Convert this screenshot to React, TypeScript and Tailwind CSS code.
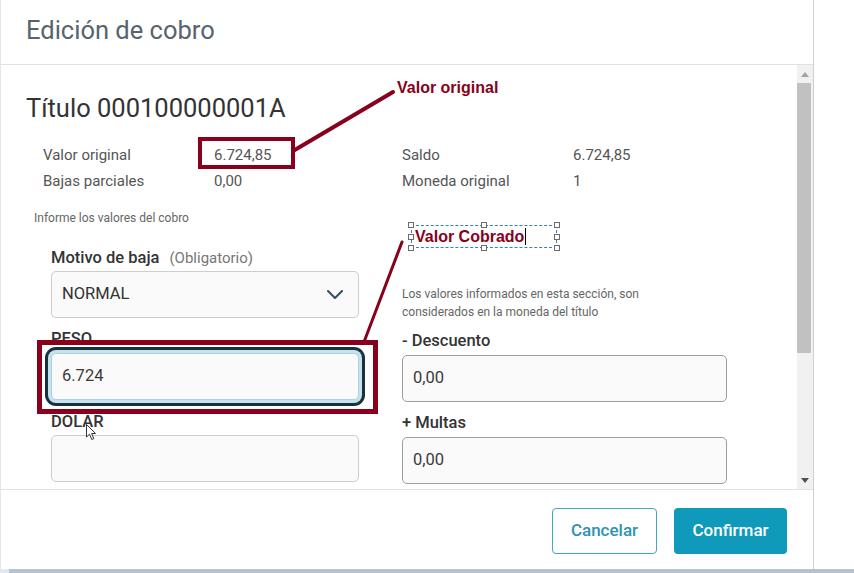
function Label({ children }: { children: React.ReactNode }) {
  return <div className="h-[20px] text-[16.5px] font-medium leading-[20px] text-[#333]">{children}</div>;
}

function Field({ value, className = '' }: { value?: string; className?: string }) {
  return (
    <div className={`flex h-[47px] items-center rounded-[5px] border bg-[#fafafa] pl-[10px] text-[16.5px] text-[#3a3a3a] ${className}`}>
      {value}
    </div>
  );
}

function Scrollbar() {
  return (
    <div className="flex w-[16px] shrink-0 flex-col bg-[#f1f1f1]">
      <div className="flex h-[18px] items-center justify-center">
        <svg width="8" height="5" viewBox="0 0 8 5">
          <path d="M0 5 L4 0 L8 5 Z" fill="#a3a3a3" />
        </svg>
      </div>
      <div className="mr-[2px] h-[270px] bg-[#c1c1c1]" />
      <div className="flex-1" />
      <div className="flex h-[18px] items-center justify-center">
        <svg width="8" height="5" viewBox="0 0 8 5">
          <path d="M0 0 L8 0 L4 5 Z" fill="#505050" />
        </svg>
      </div>
    </div>
  );
}

export default function App() {
  const handles = [
    [411, 225], [484, 225], [557, 225],
    [411, 237], [557, 237],
    [411, 248], [484, 248], [557, 248],
  ];

  return (
    <div className="relative h-[573px] w-[854px] overflow-hidden bg-white font-['Roboto',sans-serif] text-[#333]">
      <div className="flex h-[569px]">
        <div className="flex w-[814px] flex-col border-x border-l-[#e4e6e9] border-r-[#cfcfcf]">
          {/* header */}
          <header className="h-[65px] shrink-0 border-b border-[#e2e2e2] pl-[25px] pt-[15px]">
            <h1 className="text-[25.5px] leading-[30px] text-[#57646d]">Edición de cobro</h1>
          </header>

          {/* body */}
          <div className="flex h-[424px] shrink-0">
            <div className="flex-1 overflow-hidden">
              <h2 className="pl-[25px] pt-[28px] text-[25.5px] leading-[30px] text-[#333]">Título 000100000001A</h2>

              <div className="mt-[19px] grid grid-cols-[171px_188px_171px_1fr] pl-[42px] text-[15px] leading-[26px] text-[#555]">
                <span>Valor original</span>
                <span>6.724,85</span>
                <span>Saldo</span>
                <span>6.724,85</span>
                <span>Bajas parciales</span>
                <span>0,00</span>
                <span>Moneda original</span>
                <span>1</span>
              </div>

              <p className="mt-[16px] pl-[33px] text-[12px] leading-[16px] text-[#666]">Informe los valores del cobro</p>

              <div className="flex">
                <div className="ml-[50px] w-[308px]">
                  <div className="mt-[22px] flex h-[20px] items-center">
                    <Label>Motivo de baja</Label>
                    <span className="ml-[10px] text-[15px] leading-[20px] text-[#777]">(Obligatorio)</span>
                  </div>
                  <div className="mt-[3px] flex h-[47px] items-center justify-between rounded-[5px] border border-[#cdcdcd] bg-[#fafafa] pl-[10px] pr-[15px] text-[16.5px] text-[#333]">
                    <span>NORMAL</span>
                    <svg width="16" height="9" viewBox="0 0 16 9" fill="none">
                      <path d="M1 1 L8 8 L15 1" stroke="#34505f" strokeWidth="2" strokeLinecap="round" strokeLinejoin="round" />
                    </svg>
                  </div>

                  <div className="mt-[11px]">
                    <Label>PESO</Label>
                  </div>
                  <Field
                    value="6.724"
                    className="mt-[4px] border-[#a9d3e0] shadow-[0_0_0_3px_#c6e3ed,0_0_0_6px_#17313d]"
                  />

                  <div className="mt-[12px]">
                    <Label>DOLAR</Label>
                  </div>
                  <Field className="mt-[3px] border-[#cdcdcd]" />
                </div>

                <div className="ml-[43px] w-[325px]">
                  <p className="mt-[59px] text-[12px] leading-[18px] text-[#666]">
                    Los valores informados en esta sección, son
                    <br />
                    considerados en la moneda del título
                  </p>
                  <div className="mt-[10px]">
                    <Label>- Descuento</Label>
                  </div>
                  <Field value="0,00" className="mt-[4px] border-[#9d9d9d]" />
                  <div className="mt-[11px]">
                    <Label>+ Multas</Label>
                  </div>
                  <Field value="0,00" className="mt-[4px] border-[#9d9d9d]" />
                </div>
              </div>
            </div>
            <Scrollbar />
          </div>

          {/* footer */}
          <footer className="flex flex-1 items-start justify-end gap-[17px] border-t border-[#e2e2e2] pr-[26px] pt-[18px]">
            <button className="h-[46px] w-[105px] rounded-[4px] border-[1.5px] border-[#45a6c4] bg-white text-[17px] font-medium text-[#2e93b4]">
              Cancelar
            </button>
            <button className="h-[46px] w-[113px] rounded-[4px] bg-[#0f9abb] text-[17px] font-medium text-white">
              Confirmar
            </button>
          </footer>
        </div>
      </div>
      <div className="flex h-[4px]">
        <div className="w-[9px] bg-[#e3e8ef]" />
        <div className="flex-1 bg-[#b6c1d1]" />
      </div>

      {/* annotations drawn over the screenshot */}
      <svg className="pointer-events-none absolute left-0 top-0" width="854" height="573">
        <line x1="293" y1="151" x2="393" y2="92" stroke="#88001b" strokeWidth="4" strokeLinecap="round" />
        <line x1="402" y1="242" x2="364" y2="342" stroke="#88001b" strokeWidth="3" strokeLinecap="round" />
      </svg>
      <div className="pointer-events-none absolute left-[198px] top-[137px] h-[32px] w-[97px] border-[4px] border-[#88001b]" />
      <div className="pointer-events-none absolute left-[37px] top-[340px] h-[74px] w-[341px] border-[5px] border-[#88001b]" />
      <div className="absolute left-[397px] top-[79px] font-['Liberation_Sans',Arial,sans-serif] text-[16px] font-bold leading-[18px] text-[#88001b]">
        Valor original
      </div>

      <div className="absolute left-[411px] top-[225px] flex h-[23px] w-[146px] items-center border border-dashed border-[#2f7fd3] pl-[3px] font-['Liberation_Sans',Arial,sans-serif] text-[16px] font-bold leading-[18px] text-[#88001b]">
        Valor Cobrado
        <span className="ml-[1px] h-[17px] w-[1px] bg-black" />
      </div>
      {handles.map(([x, y]) => (
        <div
          key={`${x}-${y}`}
          className="absolute h-[6px] w-[6px] border border-[#6b6b6b] bg-white"
          style={{ left: x - 3, top: y - 3 }}
        />
      ))}

      {/* mouse pointer */}
      <svg className="pointer-events-none absolute left-[86px] top-[424px]" width="11" height="17" viewBox="0 0 11 17">
        <path d="M0.5 0.5 L0.5 13 L3.5 10.2 L5.8 15.5 L7.8 14.6 L5.6 9.5 L9.5 9.5 Z" fill="white" stroke="#333" strokeWidth="1" strokeLinejoin="round" />
      </svg>
    </div>
  );
}
